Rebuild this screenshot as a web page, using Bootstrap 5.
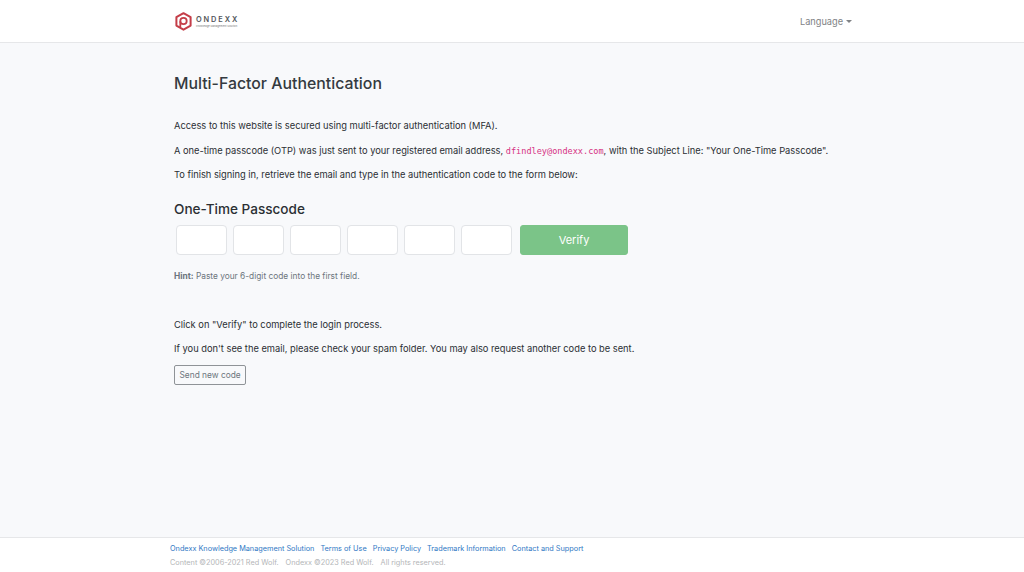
<!DOCTYPE html>
<html lang="en">

<head>
    <meta charset="UTF-8">
    <meta name="viewport" content="width=device-width, initial-scale=1.0">
    <title>Multi-Factor Authentication</title>
    <link href="https://cdn.jsdelivr.net/npm/bootstrap@5.3.0/dist/css/bootstrap.min.css" rel="stylesheet">
    <style>
        html, body {
            height: 572px;
            overflow: hidden;
        }

        body {
            font-family: Inter, "Liberation Sans", sans-serif;
            font-size: 9.31px;
            color: #2b2f33;
            background: #f8f9fb;
            display: flex;
            flex-direction: column;
        }

        .top-bar {
            height: 43px;
            background: #fff;
            border-bottom: 1px solid #e6e7e9;
            padding: 1px 172px 0 175px;
        }

        .logo-word {
            font-size: 7.4px;
            font-weight: 600;
            letter-spacing: 1.9px;
            line-height: 9px;
            color: #54575c;
        }

        .logo-sub {
            font-size: 2.6px;
            line-height: 4px;
            color: #777;
        }

        .lang-toggle {
            font-size: 9.2px;
            color: #808285;
            padding: 0;
            text-decoration: none;
        }

        .lang-toggle:hover {
            color: #808285;
        }

        .lang-toggle::after {
            margin-left: 3px;
            vertical-align: 2px;
            border-top-width: 3px;
            border-right-width: 3px;
            border-left-width: 3px;
        }

        .page-main {
            flex: 1;
            padding: 29px 174px 0;
        }

        .page-title {
            font-size: 15.85px;
            font-weight: 500;
            line-height: 24px;
            color: #343a40;
            margin-bottom: 23px;
        }

        .copy-line {
            line-height: 14.5px;
            margin-bottom: 10px;
        }

        .copy-line code {
            font-family: "DejaVu Sans Mono", "Liberation Mono", monospace;
            font-size: 8.55px;
            line-height: 1;
            color: #d63384;
        }

        .otp-title {
            font-size: 13.55px;
            font-weight: 500;
            line-height: 20px;
            margin: 16px 0 6px;
        }

        .otp-row {
            padding-left: 2px;
            gap: 6px;
        }

        .otp-box {
            width: 51px;
            height: 30px;
            padding: 0;
            font-size: 12px;
            border-color: #e2e4e7;
            border-radius: 4px;
        }

        .verify-btn {
            width: 108px;
            height: 30px;
            margin-left: 2px;
            padding: 1px 0 0;
            font-size: 11px;
            border-radius: 3px;
            background: #7bc488;
            border-color: #7bc488;
            color: #fff;
            opacity: 1;
        }

        .hint-line {
            font-size: 8.36px;
            line-height: 12px;
            color: #6c757d;
            margin: 15px 0 36px;
        }

        .send-btn {
            font-size: 8.36px;
            line-height: 12px;
            padding: 3px 4.5px;
            margin-top: -2px;
            color: #6c757d;
            border-color: #8f9397;
            border-radius: 2px;
        }

        .page-foot {
            height: 35px;
            background: #fff;
            border-top: 1px solid #e6e7e9;
            padding: 4px 170px 0;
            font-size: 7.3px;
            line-height: 14px;
        }

        .page-foot a {
            color: #2f78c4;
            text-decoration: none;
            margin-right: 4px;
        }

        .foot-note {
            color: #b4b6b8;
        }

        .foot-note span {
            margin-right: 5px;
        }
    </style>
</head>

<body>
    <nav class="top-bar d-flex justify-content-between align-items-center">
        <a href="#" class="d-flex align-items-center gap-1 text-decoration-none">
            <svg width="17" height="19" viewBox="0 0 17 19" fill="none">
                <path d="M8.5 1.2 15.6 5.2V13.6L8.5 17.7 1.4 13.6V5.2Z" stroke="#c43d48" stroke-width="2" stroke-linejoin="round"/>
                <circle cx="8.5" cy="9" r="3.2" stroke="#c43d48" stroke-width="1.8"/>
                <path d="M5.3 9.2V15" stroke="#c43d48" stroke-width="1.8"/>
            </svg>
            <span class="d-flex flex-column">
                <span class="logo-word">ONDEXX</span>
                <span class="logo-sub">Knowledge Management Solution</span>
            </span>
        </a>
        <div class="dropdown">
            <a href="#" class="lang-toggle dropdown-toggle" data-bs-toggle="dropdown">Language</a>
        </div>
    </nav>

    <main class="page-main">
        <h1 class="page-title">Multi-Factor Authentication</h1>
        <p class="copy-line">Access to this website is secured using multi-factor authentication (MFA).</p>
        <p class="copy-line">A one-time passcode (OTP) was just sent to your registered email address, <code>dfindley@ondexx.com</code>, with the Subject Line: "Your One-Time Passcode".</p>
        <p class="copy-line">To finish signing in, retrieve the email and type in the authentication code to the form below:</p>

        <h2 class="otp-title">One-Time Passcode</h2>
        <form class="d-flex otp-row">
            <input class="form-control otp-box" type="text" maxlength="6" aria-label="Digit 1">
            <input class="form-control otp-box" type="text" maxlength="1" aria-label="Digit 2">
            <input class="form-control otp-box" type="text" maxlength="1" aria-label="Digit 3">
            <input class="form-control otp-box" type="text" maxlength="1" aria-label="Digit 4">
            <input class="form-control otp-box" type="text" maxlength="1" aria-label="Digit 5">
            <input class="form-control otp-box" type="text" maxlength="1" aria-label="Digit 6">
            <button type="button" class="btn btn-success verify-btn">Verify</button>
        </form>
        <p class="hint-line"><strong>Hint:</strong> Paste your 6-digit code into the first field.</p>

        <p class="copy-line">Click on "Verify" to complete the login process.</p>
        <p class="copy-line">If you don't see the email, please check your spam folder. You may also request another code to be sent.</p>
        <button type="button" class="btn btn-outline-secondary send-btn">Send new code</button>
    </main>

    <footer class="page-foot">
        <div>
            <a href="#">Ondexx Knowledge Management Solution</a>
            <a href="#">Terms of Use</a>
            <a href="#">Privacy Policy</a>
            <a href="#">Trademark Information</a>
            <a href="#">Contact and Support</a>
        </div>
        <div class="foot-note"><span>Content ©2006-2021 Red Wolf.</span> <span>Ondexx ©2023 Red Wolf.</span> <span>All rights reserved.</span></div>
    </footer>

    <script src="https://cdn.jsdelivr.net/npm/bootstrap@5.3.0/dist/js/bootstrap.bundle.min.js"></script>
</body>

</html>
